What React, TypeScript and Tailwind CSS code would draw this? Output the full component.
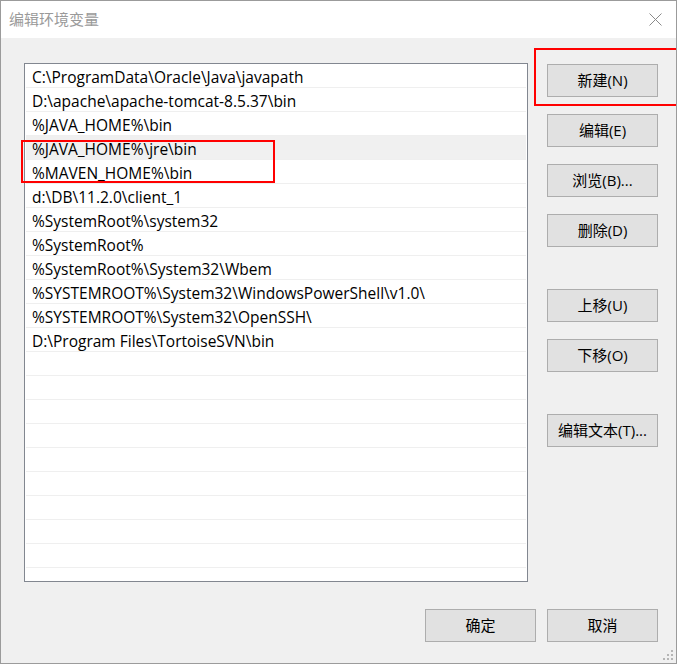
import React from 'react';

const paths = [
  'C:\\ProgramData\\Oracle\\Java\\javapath',
  'D:\\apache\\apache-tomcat-8.5.37\\bin',
  '%JAVA_HOME%\\bin',
  '%JAVA_HOME%\\jre\\bin',
  '%MAVEN_HOME%\\bin',
  'd:\\DB\\11.2.0\\client_1',
  '%SystemRoot%\\system32',
  '%SystemRoot%',
  '%SystemRoot%\\System32\\Wbem',
  '%SYSTEMROOT%\\System32\\WindowsPowerShell\\v1.0\\',
  '%SYSTEMROOT%\\System32\\OpenSSH\\',
  'D:\\Program Files\\TortoiseSVN\\bin',
];

const TOTAL_ROWS = 22;
const SELECTED = 3;

const font = "font-['Open_Sans','Noto_Sans_CJK_SC',sans-serif]";

const Button: React.FC<{ label: string; className?: string }> = ({ label, className = '' }) => (
  <button
    className={`w-[111px] h-[33px] border border-[#adadad] bg-[#e1e1e1] text-[15px] text-black flex items-center justify-center ${className}`}
  >
    {label}
  </button>
);

const SizeGrip: React.FC = () => (
  <svg width="12" height="12" viewBox="0 0 12 12" className="absolute right-[2px] bottom-[2px]">
    <rect x="9" y="1" width="2" height="2" fill="#b5b5b5" />
    <rect x="5" y="5" width="2" height="2" fill="#b5b5b5" />
    <rect x="9" y="5" width="2" height="2" fill="#b5b5b5" />
    <rect x="1" y="9" width="2" height="2" fill="#b5b5b5" />
    <rect x="5" y="9" width="2" height="2" fill="#b5b5b5" />
    <rect x="9" y="9" width="2" height="2" fill="#b5b5b5" />
  </svg>
);

const App: React.FC = () => {
  const rows = Array.from({ length: TOTAL_ROWS }, (_, i) => paths[i] ?? '');

  return (
    <div className={`relative w-[677px] h-[664px] border border-[#9b9b9b] flex flex-col overflow-hidden ${font}`}>
      {/* Title bar */}
      <div className="h-[37px] bg-white flex items-center justify-between pl-[8px] pr-[14px] shrink-0">
        <span className="text-[15px] text-[#9a9a9a] font-['Noto_Sans_CJK_SC',sans-serif]">编辑环境变量</span>
        <svg width="13" height="13" viewBox="0 0 13 13">
          <path d="M0.5 0.5 L12.5 12.5 M12.5 0.5 L0.5 12.5" stroke="#8a8a8a" strokeWidth="1" fill="none" />
        </svg>
      </div>

      {/* Body */}
      <div className="flex-1 bg-[#f0f0f0] flex flex-col pl-[23px] pr-[18px] pt-[25px]">
        <div className="flex gap-[19px]">
          {/* Path list */}
          <div className="w-[504px] h-[519px] border border-[#828790] bg-white overflow-hidden">
            {rows.map((p, i) => (
              <div
                key={i}
                className={`h-[24px] mx-[1px] border-b border-[#efefef] pl-[6px] pt-[2px] text-[15.5px] leading-[22px] text-black whitespace-nowrap ${
                  i === SELECTED ? 'bg-[#f0f0f0]' : ''
                }`}
              >
                {p}
              </div>
            ))}
          </div>

          {/* Action buttons */}
          <div className="flex flex-col pt-[1px]">
            <Button label="新建(N)" />
            <Button label="编辑(E)" className="mt-[17px]" />
            <Button label="浏览(B)..." className="mt-[17px]" />
            <Button label="删除(D)" className="mt-[17px]" />
            <Button label="上移(U)" className="mt-[42px]" />
            <Button label="下移(O)" className="mt-[17px]" />
            <Button label="编辑文本(T)..." className="mt-[42px]" />
          </div>
        </div>

        {/* Footer */}
        <div className="flex justify-end gap-[11px] mt-[27px]">
          <Button label="确定" />
          <Button label="取消" />
        </div>
      </div>

      {/* Annotation boxes */}
      <div className="absolute left-[533px] top-[47px] w-[150px] h-[58px] border-2 border-[#ff0000]" />
      <div className="absolute left-[20px] top-[139px] w-[254px] h-[43px] border-2 border-[#ff0000]" />

      <SizeGrip />
    </div>
  );
};

export default App;
